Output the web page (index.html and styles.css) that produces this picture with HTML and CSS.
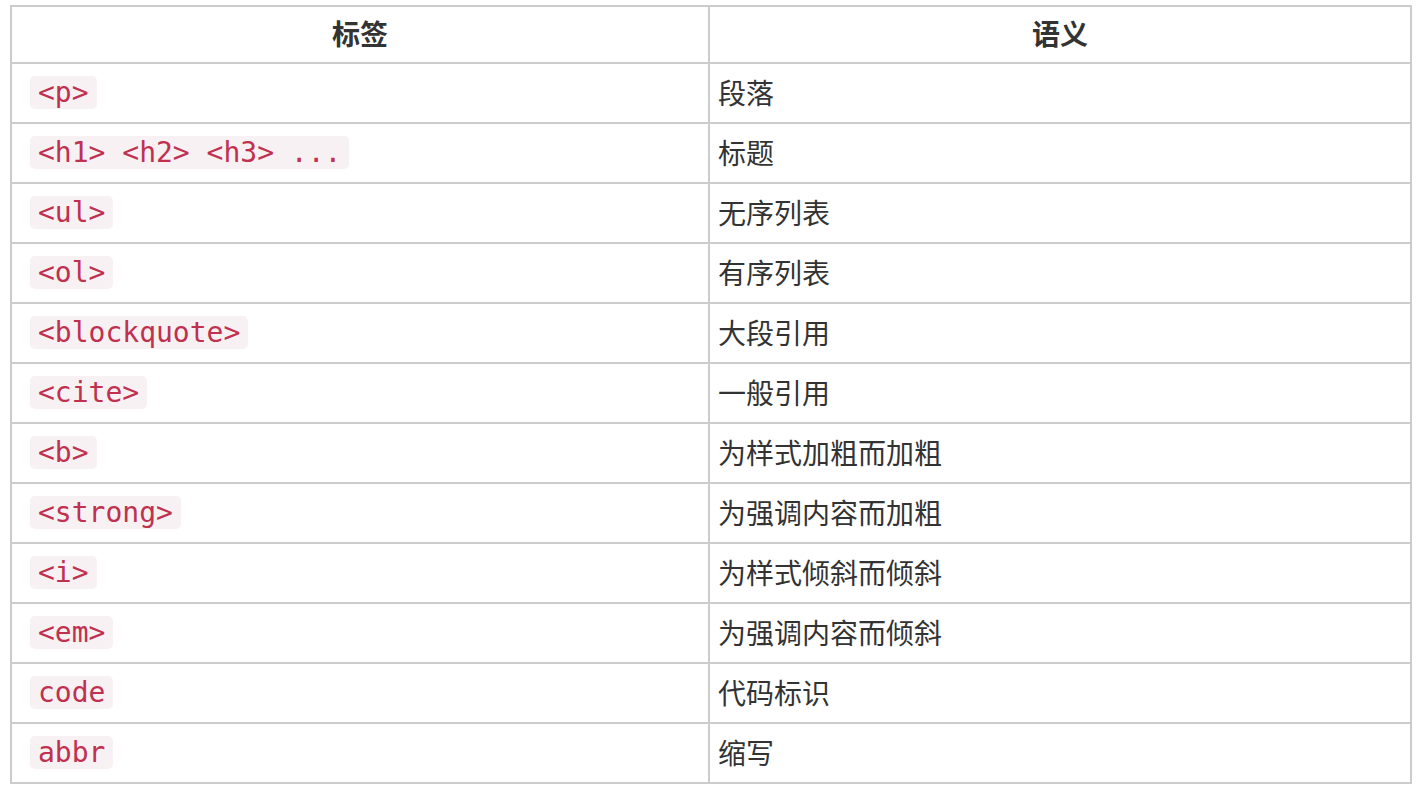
FILE: index.html
```html
<!DOCTYPE html>
<html lang="zh">
<head>
<meta charset="utf-8">
<title>标签语义</title>
<link rel="stylesheet" href="styles.css">
</head>
<body>
<table class="tags">
  <colgroup>
    <col class="col-tag">
    <col class="col-meaning">
  </colgroup>
  <thead>
    <tr><th>标签</th><th>语义</th></tr>
  </thead>
  <tbody>
    <tr><td class="tag"><code>&lt;p&gt;</code></td><td>段落</td></tr>
    <tr><td class="tag"><code>&lt;h1&gt; &lt;h2&gt; &lt;h3&gt; ...</code></td><td>标题</td></tr>
    <tr><td class="tag"><code>&lt;ul&gt;</code></td><td>无序列表</td></tr>
    <tr><td class="tag"><code>&lt;ol&gt;</code></td><td>有序列表</td></tr>
    <tr><td class="tag"><code>&lt;blockquote&gt;</code></td><td>大段引用</td></tr>
    <tr><td class="tag"><code>&lt;cite&gt;</code></td><td>一般引用</td></tr>
    <tr><td class="tag"><code>&lt;b&gt;</code></td><td>为样式加粗而加粗</td></tr>
    <tr><td class="tag"><code>&lt;strong&gt;</code></td><td>为强调内容而加粗</td></tr>
    <tr><td class="tag"><code>&lt;i&gt;</code></td><td>为样式倾斜而倾斜</td></tr>
    <tr><td class="tag"><code>&lt;em&gt;</code></td><td>为强调内容而倾斜</td></tr>
    <tr><td class="tag"><code>code</code></td><td>代码标识</td></tr>
    <tr><td class="tag"><code>abbr</code></td><td>缩写</td></tr>
  </tbody>
</table>
</body>
</html>
```
FILE: styles.css
```css
html, body {
  margin: 0;
  padding: 0;
  background: #ffffff;
}

body {
  padding: 5px 0 0 10px;
  font-family: "Noto Sans CJK SC", "Noto Sans", sans-serif;
  font-size: 28px;
  color: #333333;
}

.tags {
  width: 1400px;
  border-collapse: collapse;
  table-layout: fixed;
}

.tags .col-tag {
  width: 698px;
}

.tags .col-meaning {
  width: 702px;
}

.tags th,
.tags td {
  border: 2px solid #cccccc;
  vertical-align: middle;
  line-height: 1;
  padding: 0 8px 3px;
}

.tags th {
  height: 52px;
  text-align: center;
  font-weight: 700;
  color: #333333;
}

.tags td {
  height: 55px;
  text-align: left;
}

.tags td.tag {
  padding-left: 18px;
}

.tags code {
  font-family: "DejaVu Sans Mono", monospace;
  font-size: 28px;
  line-height: 1;
  color: #c0304f;
  background: #f8f1f3;
  border-radius: 5px;
  padding: 0 8px;
  white-space: pre;
}
```
